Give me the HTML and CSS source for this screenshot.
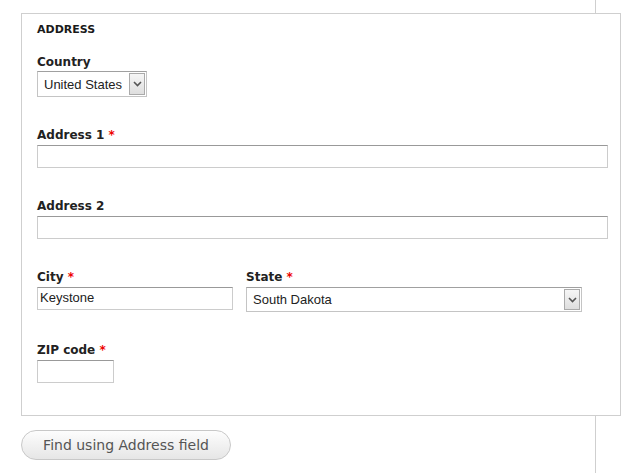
FILE: index.html
```html
<!DOCTYPE html>
<html>
<head>
<meta charset="utf-8">
<link rel="stylesheet" href="styles.css">
</head>
<body>
<div class="page">
  <div class="fieldset">
    <div class="legend">ADDRESS</div>
    <div class="items">
      <div class="item">
        <div class="label">Country</div>
        <div class="select select-country">
          <span class="select-text">United States</span>
          <span class="arrow"><svg width="9" height="6" viewBox="0 0 9 6"><path d="M1 1 L4.5 4.5 L8 1" fill="none" stroke="#555" stroke-width="1.6"/></svg></span>
        </div>
      </div>
      <div class="item">
        <div class="label">Address 1 <span class="req">*</span></div>
        <div class="input input-full"></div>
      </div>
      <div class="item">
        <div class="label">Address 2</div>
        <div class="input input-full"></div>
      </div>
      <div class="row">
        <div class="item">
          <div class="label">City <span class="req">*</span></div>
          <div class="input input-city">Keystone</div>
        </div>
        <div class="item">
          <div class="label">State <span class="req">*</span></div>
          <div class="select select-state">
            <span class="select-text">South Dakota</span>
            <span class="arrow"><svg width="9" height="6" viewBox="0 0 9 6"><path d="M1 1 L4.5 4.5 L8 1" fill="none" stroke="#555" stroke-width="1.6"/></svg></span>
          </div>
        </div>
      </div>
      <div class="item">
        <div class="label">ZIP code <span class="req">*</span></div>
        <div class="input input-zip"></div>
      </div>
    </div>
  </div>
  <div class="button">Find using Address field</div>
</div>
</body>
</html>
```

FILE: styles.css
```css
html, body {
  margin: 0;
  padding: 0;
  background: #fff;
}
.page {
  width: 596px;
  min-height: 100vh;
  box-sizing: border-box;
  border-right: 1px solid #cfcfcf;
  padding: 13px 0 0 21px;
  font-family: "DejaVu Sans", Verdana, sans-serif;
  color: #222;
}
.fieldset {
  width: 600px;
  box-sizing: border-box;
  border: 1px solid #cfcfcf;
  background: #fff;
  padding: 8px 12px 32px 15px;
  position: relative;
}
.legend {
  font-size: 11px;
  font-weight: bold;
  line-height: 16px;
  color: #1a1a1a;
  margin-bottom: 16px;
}
.items {
  display: flex;
  flex-direction: column;
  gap: 30px;
}
.row {
  display: flex;
  gap: 13px;
  align-items: flex-start;
}
.label {
  font-size: 12px;
  font-weight: bold;
  line-height: 16px;
  color: #222;
  margin-bottom: 2px;
}
.req {
  color: #e00;
}
.input {
  height: 23px;
  box-sizing: border-box;
  border: 1px solid #ccc;
  border-top-color: #999;
  font-family: "Liberation Sans", Arial, sans-serif;
  font-size: 13px;
  line-height: 20px;
  padding: 0 2px;
  color: #222;
}
.input-full {
  width: 571px;
}
.input-city {
  width: 196px;
}
.input-zip {
  width: 77px;
}
.select {
  display: flex;
  align-items: center;
  box-sizing: border-box;
  border: 1px solid #c4c4c4;
  border-top-color: #a0a0a0;
  font-family: "Liberation Sans", Arial, sans-serif;
  font-size: 13px;
  color: #222;
  background: #fff;
}
.select-text {
  flex: 1;
  padding-left: 6px;
}
.select-country {
  width: 110px;
  height: 26px;
  margin-top: -1px;
}
.select-state {
  width: 336px;
  height: 25px;
}
.arrow {
  align-self: stretch;
  width: 16px;
  margin: 1px;
  box-sizing: border-box;
  border: 1px solid #aaa;
  background: linear-gradient(#f6f6f6, #dedede);
  display: flex;
  align-items: center;
  justify-content: center;
}
.arrow svg {
  display: block;
}
.button {
  margin-top: 14px;
  width: 210px;
  height: 30px;
  box-sizing: border-box;
  border: 1px solid #c8c8c8;
  border-radius: 15px;
  background: linear-gradient(#fdfdfd, #e6e6e6);
  font-size: 14px;
  line-height: 28px;
  text-align: center;
  color: #555;
}
```
